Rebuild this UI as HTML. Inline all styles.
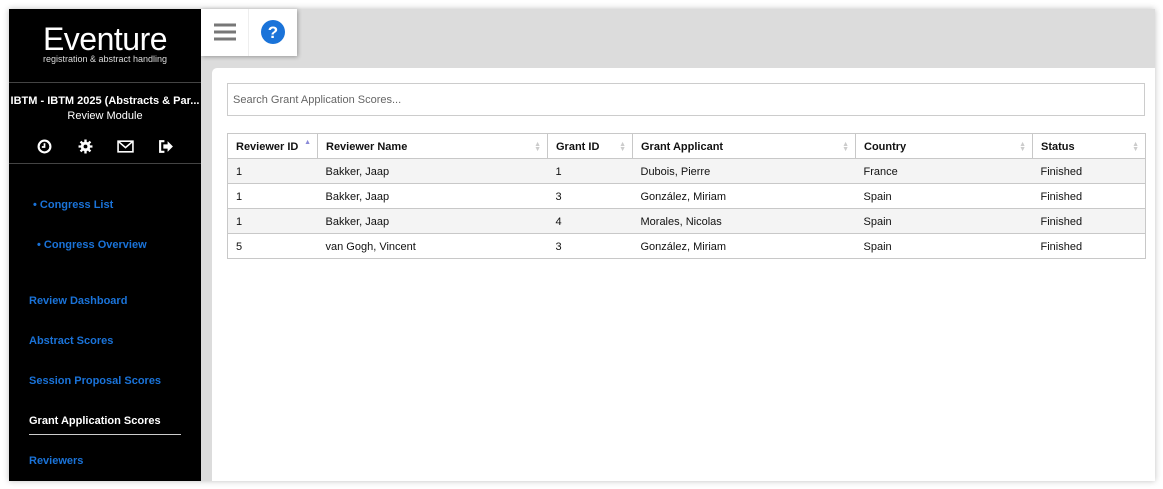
<!DOCTYPE html>
<html><head><style>
*{margin:0;padding:0;box-sizing:border-box}
body{width:1163px;height:489px;background:#fff;font-family:"Liberation Sans",sans-serif;position:relative;overflow:hidden}
.frame{position:absolute;left:9px;top:9px;width:1146px;height:472px;background:#dcdcdc;box-shadow:0 0 6px rgba(0,0,0,.25)}
.side{position:absolute;left:9px;top:9px;width:192px;height:472px;background:#000;color:#fff}
.logo{position:absolute;left:0;width:192px;top:13px;text-align:center;font-size:32px;letter-spacing:-0.5px;line-height:34px}
.sub{position:absolute;left:0;width:192px;top:45px;text-align:center;font-size:9px;color:#ddd}
.hr{position:absolute;left:0;width:192px;height:1px;background:#444}
.t1{position:absolute;left:0;width:192px;top:86px;text-align:center;font-size:11px;font-weight:bold;white-space:nowrap;overflow:hidden}
.t2{position:absolute;left:0;width:192px;top:101px;text-align:center;font-size:11px}
.ic{position:absolute;top:130px}
.lk{position:absolute;font-size:11px;font-weight:bold;color:#1a73d9;white-space:nowrap}
.top{position:absolute;left:201px;top:9px;width:96px;height:47px;background:#fff;box-shadow:1px 1px 4px rgba(0,0,0,.3)}
.panel{position:absolute;left:212px;top:68px;width:943px;height:413px;background:#fff;border-top-left-radius:5px}
.search{position:absolute;left:227px;top:83px;width:918px;height:33px;border:1px solid #ccc;font-size:11px;color:#666;padding:10px 5px}
table{position:absolute;left:227px;top:133px;width:919px;border-collapse:collapse;font-size:11px}
td,th{border:1px solid #c8c8c8;height:25px;padding:2px 8px 0;text-align:left;color:#111}
th{font-weight:bold;position:relative}
td{border-left:none;border-right:none}
tr:nth-child(even) td{background:#f4f4f4}
tr td:first-child{border-left:1px solid #c8c8c8}
tr td:last-child{border-right:1px solid #c8c8c8}
.s{position:absolute;right:6px;top:8px;font-size:7px;line-height:5px;color:#ccc}
</style></head><body>
<div class="frame"></div>
<div class="side">
<div class="logo">Eventure</div>
<div class="sub">registration &amp; abstract handling</div>
<div class="hr" style="top:73px"></div>
<div class="t1">IBTM - IBTM 2025 (Abstracts &amp; Par...</div>
<div class="t2">Review Module</div>
<svg class="ic" style="left:28px" width="15" height="15" viewBox="0 0 14 14"><circle cx="7" cy="7" r="5.5" fill="none" stroke="#fff" stroke-width="2"/><path d="M7 4v3.5H4.5" stroke="#fff" stroke-width="1.6" fill="none"/></svg>
<svg class="ic" style="left:69px" width="15" height="15" viewBox="0 0 14 14"><circle cx="7" cy="7" r="4.5" fill="#fff"/><path d="M7 0.5v13M0.5 7h13M2.4 2.4l9.2 9.2M11.6 2.4l-9.2 9.2" stroke="#fff" stroke-width="2.2"/><circle cx="7" cy="7" r="1.8" fill="#000"/></svg>
<svg class="ic" style="left:108px" width="17" height="15" viewBox="0 0 16 14"><rect x="1" y="2" width="14" height="10" fill="none" stroke="#fff" stroke-width="1.5"/><path d="M1 2l7 6 7-6" fill="none" stroke="#fff" stroke-width="1.5"/></svg>
<svg class="ic" style="left:149px" width="16" height="15" viewBox="0 0 15 14"><path d="M6 2H2v10h4" fill="none" stroke="#fff" stroke-width="2"/><path d="M5 5h4V2l5 5-5 5V9H5z" fill="#fff"/></svg>
<div class="hr" style="top:154px"></div>
<div class="lk" style="left:24px;top:190px">• Congress List</div>
<div class="lk" style="left:28px;top:230px">• Congress Overview</div>
<div class="lk" style="left:20px;top:286px">Review Dashboard</div>
<div class="lk" style="left:20px;top:326px">Abstract Scores</div>
<div class="lk" style="left:20px;top:366px">Session Proposal Scores</div>
<div class="lk" style="left:20px;top:406px;color:#fff">Grant Application Scores</div>
<div style="position:absolute;left:20px;top:425px;width:152px;height:1px;background:#ccc"></div>
<div class="lk" style="left:20px;top:446px">Reviewers</div>
</div>
<div class="top">
<svg style="position:absolute;left:13px;top:14px" width="22" height="18" viewBox="0 0 22 18"><path d="M0 2h22M0 9h22M0 16h22" stroke="#777" stroke-width="3"/></svg>
<div style="position:absolute;left:47px;top:0;width:1px;height:47px;background:#eee"></div>
<svg style="position:absolute;left:60px;top:11px" width="24" height="24" viewBox="0 0 24 24"><circle cx="12" cy="12" r="12" fill="#1a73d9"/><text x="12" y="18" text-anchor="middle" font-family="Liberation Sans" font-weight="bold" font-size="17" fill="#fff">?</text></svg>
</div>
<div class="panel"></div>
<div class="search">Search Grant Application Scores...</div>
<table>
<tr><th style="width:90px">Reviewer ID<span class="s" style="color:#8a8ad8;top:6px">▲</span></th><th style="width:230px">Reviewer Name<span class="s">▲<br>▼</span></th><th style="width:85px">Grant ID<span class="s">▲<br>▼</span></th><th style="width:223px">Grant Applicant<span class="s">▲<br>▼</span></th><th style="width:177px">Country<span class="s">▲<br>▼</span></th><th>Status<span class="s">▲<br>▼</span></th></tr>
<tr><td>1</td><td>Bakker, Jaap</td><td>1</td><td>Dubois, Pierre</td><td>France</td><td>Finished</td></tr>
<tr><td>1</td><td>Bakker, Jaap</td><td>3</td><td>González, Miriam</td><td>Spain</td><td>Finished</td></tr>
<tr><td>1</td><td>Bakker, Jaap</td><td>4</td><td>Morales, Nicolas</td><td>Spain</td><td>Finished</td></tr>
<tr><td>5</td><td>van Gogh, Vincent</td><td>3</td><td>González, Miriam</td><td>Spain</td><td>Finished</td></tr>
</table>
</body></html>
